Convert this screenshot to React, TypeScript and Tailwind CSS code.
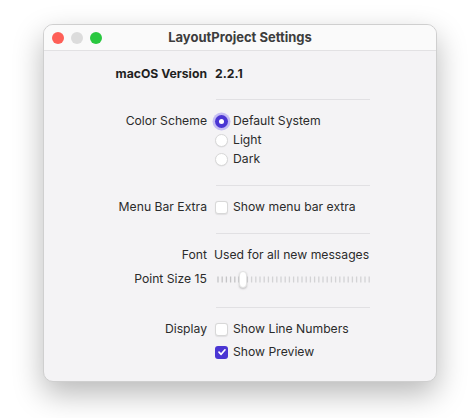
import React from "react";

const font = { fontFamily: "Inter, 'Liberation Sans', sans-serif" };

const Radio = ({ checked }: { checked?: boolean }) =>
  checked ? (
    <span className="flex h-[13px] w-[13px] shrink-0 items-center justify-center rounded-full bg-[#4b36d3] shadow-[0_0_0_2.5px_rgba(110,90,240,0.35)]">
      <span className="h-[5px] w-[5px] rounded-full bg-white" />
    </span>
  ) : (
    <span className="h-[13px] w-[13px] shrink-0 rounded-full border border-[#d8d8d8] bg-white shadow-[0_0.5px_1px_rgba(0,0,0,0.08)]" />
  );

const Checkbox = ({ checked }: { checked?: boolean }) =>
  checked ? (
    <span className="flex h-[13px] w-[13px] shrink-0 items-center justify-center rounded-[3px] bg-[#4b36d3]">
      <svg width="10" height="10" viewBox="0 0 10 10" fill="none">
        <path d="M2 5.2 L4.1 7.3 L8 2.8" stroke="white" strokeWidth="1.7" strokeLinecap="round" strokeLinejoin="round" />
      </svg>
    </span>
  ) : (
    <span className="h-[13px] w-[13px] shrink-0 rounded-[3px] border border-[#d8d8d8] bg-white shadow-[0_0.5px_1px_rgba(0,0,0,0.08)]" />
  );

const Row = ({ label, bold, children, className = "" }: { label?: string; bold?: boolean; children: React.ReactNode; className?: string }) => (
  <div className={`flex h-[19px] items-center ${className}`}>
    <div className={`w-[163px] shrink-0 text-right ${bold ? "font-bold text-[#1f1f1f]" : "text-[#2b2b2b]"}`}>{label}</div>
    <div className="ml-[8px] flex items-center gap-[5px]">{children}</div>
  </div>
);

const Divider = ({ className = "" }: { className?: string }) => (
  <div className={`ml-[172px] h-px w-[154px] bg-[#e1e0e3] ${className}`} />
);

const Slider = () => {
  const ticks = Array.from({ length: 37 }, (_, i) => 3 + i * 4.2);
  return (
    <div className="relative h-[19px] w-[156px]">
      <svg width="156" height="19" viewBox="0 0 156 19" className="absolute left-0 top-0">
        {ticks.map((x, i) => (
          <line key={i} x1={x} x2={x} y1="6.5" y2="12.5" stroke={x < 28 ? "#c4c4c6" : "#d3d3d5"} strokeWidth="1.3" />
        ))}
      </svg>
      <div className="absolute left-[24px] top-[1px] h-[17px] w-[8px] rounded-[4px] border border-[#e2e2e2] bg-white shadow-[0_1px_2px_rgba(0,0,0,0.2)]" />
    </div>
  );
};

export default function App() {
  return (
    <div className="min-h-[418px] w-[474px] bg-white pl-[43px] pt-[24px] text-[12.2px] text-[#2b2b2b]" style={font}>
      <div className="h-[358px] w-[394px] overflow-hidden rounded-[10px] border border-[#cfcfcf] bg-[#f4f3f5] shadow-[0_12px_30px_rgba(0,0,0,0.28)]">
        <div className="relative flex h-[26px] items-center justify-center border-b border-[#e2e1e3] bg-[#fafafa]">
          <div className="absolute left-[8px] top-[7px] flex gap-[7px]">
            <span className="h-[12px] w-[12px] rounded-full bg-[#fe5f57]" />
            <span className="h-[12px] w-[12px] rounded-full bg-[#dcdcdc]" />
            <span className="h-[12px] w-[12px] rounded-full bg-[#2ac840]" />
          </div>
          <span className="text-[13px] font-bold text-[#3d3d3d]">LayoutProject Settings</span>
        </div>

        <div className="pt-[14px]">
          <Row label="macOS Version" bold>
            <span className="font-bold text-[#1f1f1f]">2.2.1</span>
          </Row>
          <Divider className="mt-[15px]" />

          <Row label="Color Scheme" className="mt-[12px]">
            <Radio checked />
            <span>Default System</span>
          </Row>
          <Row>
            <Radio />
            <span>Light</span>
          </Row>
          <Row>
            <Radio />
            <span>Dark</span>
          </Row>
          <Divider className="mt-[16px]" />

          <Row label="Menu Bar Extra" className="mt-[12px]">
            <Checkbox />
            <span>Show menu bar extra</span>
          </Row>
          <Divider className="mt-[16px]" />

          <Row label="Font" className="mt-[12px]">
            <span className="-ml-[1px]">Used for all new messages</span>
          </Row>
          <Row label="Point Size 15" className="mt-[5px]">
            <Slider />
          </Row>
          <Divider className="mt-[18px]" />

          <Row label="Display" className="mt-[12px]">
            <Checkbox />
            <span>Show Line Numbers</span>
          </Row>
          <Row className="mt-[4px]">
            <Checkbox checked />
            <span>Show Preview</span>
          </Row>
        </div>
      </div>
    </div>
  );
}
